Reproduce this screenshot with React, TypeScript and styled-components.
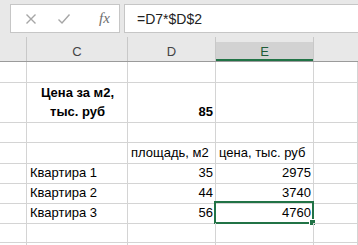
import React from "react";
import styled, { createGlobalStyle } from "styled-components";

const GlobalStyle = createGlobalStyle`
  html, body {
    margin: 0;
    padding: 0;
    background: #ffffff;
  }
  body {
    font-family: "Liberation Sans", Arial, sans-serif;
    overflow: hidden;
  }
`;

type Align = "left" | "right" | "center";

interface CellData {
  text?: string;
  align?: Align;
  bold?: boolean;
  selected?: boolean;
}

const columns = ["", "C", "D", "E", ""];
const selectedCol = 3;

const rows: { height: number; cells: CellData[] }[] = [
  { height: 21, cells: [{}, {}, {}, {}, {}] },
  {
    height: 40,
    cells: [
      {},
      { text: "Цена за м2,\nтыс. руб", align: "center", bold: true },
      { text: "85", align: "right", bold: true },
      {},
      {},
    ],
  },
  { height: 20, cells: [{}, {}, {}, {}, {}] },
  {
    height: 20,
    cells: [
      {},
      {},
      { text: "площадь, м2", align: "left" },
      { text: "цена, тыс. руб", align: "left" },
      {},
    ],
  },
  {
    height: 20,
    cells: [
      {},
      { text: "Квартира 1", align: "left" },
      { text: "35", align: "right" },
      { text: "2975", align: "right" },
      {},
    ],
  },
  {
    height: 20,
    cells: [
      {},
      { text: "Квартира 2", align: "left" },
      { text: "44", align: "right" },
      { text: "3740", align: "right" },
      {},
    ],
  },
  {
    height: 20,
    cells: [
      {},
      { text: "Квартира 3", align: "left" },
      { text: "56", align: "right" },
      { text: "4760", align: "right", selected: true },
      {},
    ],
  },
  { height: 20, cells: [{}, {}, {}, {}, {}] },
  { height: 20, cells: [{}, {}, {}, {}, {}] },
];

const COLS = "27px 101px 88px 98px 1fr";

const App = () => {
  return (
    <Page>
      <GlobalStyle />
      <FormulaBar>
        <ButtonBox>
          <BarIcon>
            <svg width="12" height="12" viewBox="0 0 12 12">
              <path d="M1.5 1.5 L10.5 10.5 M10.5 1.5 L1.5 10.5" stroke="#a6a6a6" strokeWidth="1.4" fill="none" />
            </svg>
          </BarIcon>
          <BarIcon>
            <svg width="14" height="12" viewBox="0 0 14 12">
              <path d="M1.5 6.5 L5 10 L12.5 1.5" stroke="#a6a6a6" strokeWidth="1.4" fill="none" />
            </svg>
          </BarIcon>
          <FxLabel>fx</FxLabel>
        </ButtonBox>
        <FormulaInput>=D7*$D$2</FormulaInput>
      </FormulaBar>
      <HeaderRow>
        {columns.map((c, i) => (
          <HeaderCell key={i} $selected={i === selectedCol}>
            {c}
          </HeaderCell>
        ))}
      </HeaderRow>
      {rows.map((row, r) => (
        <Row key={r} $height={row.height}>
          {row.cells.map((cell, c) => (
            <Cell key={c} $align={cell.align || "left"} $bold={!!cell.bold}>
              {cell.text}
              {cell.selected && (
                <Selection>
                  <FillHandle />
                </Selection>
              )}
            </Cell>
          ))}
        </Row>
      ))}
    </Page>
  );
};

export default App;

const Page = styled.div`
  width: 358px;
  height: 245px;
  overflow: hidden;
  background: #ffffff;
`;

const FormulaBar = styled.div`
  display: flex;
  align-items: stretch;
  gap: 4px;
  height: 37px;
  padding: 4px 0 0 10px;
  box-sizing: border-box;
  background: #e8e8e8;
`;

const ButtonBox = styled.div`
  display: flex;
  align-items: center;
  width: 110px;
  height: 29px;
  box-sizing: border-box;
  border: 1px solid #c6c6c6;
  background: #ffffff;
  padding-left: 14px;
`;

const BarIcon = styled.div`
  width: 32px;
  display: flex;
  align-items: center;
  justify-content: flex-start;
  margin-top: 1px;
`;

const FxLabel = styled.span`
  font-family: "Liberation Serif", "Times New Roman", serif;
  font-style: italic;
  font-size: 15px;
  color: #6e6e6e;
  margin-left: 10px;
`;

const FormulaInput = styled.div`
  flex: 1;
  height: 29px;
  box-sizing: border-box;
  border: 1px solid #c6c6c6;
  border-right: none;
  background: #ffffff;
  padding-left: 12px;
  display: flex;
  align-items: center;
  font-size: 14px;
  color: #222222;
`;

const HeaderRow = styled.div`
  display: grid;
  grid-template-columns: ${COLS};
  height: 25px;
  background: #e8e8e8;
  border-bottom: 1px solid #9b9b9b;
  box-sizing: border-box;
`;

const HeaderCell = styled.div<{ $selected: boolean }>`
  display: flex;
  align-items: flex-end;
  justify-content: center;
  padding-bottom: 2px;
  box-sizing: border-box;
  border-right: 1px solid #c8c8c8;
  font-size: 13px;
  color: ${(p) => (p.$selected ? "#1e5c38" : "#444444")};
  background: ${(p) =>
    p.$selected ? "linear-gradient(transparent 5px, #d2d2d2 5px)" : "transparent"};
  box-shadow: ${(p) => (p.$selected ? "inset 0 -2px 0 #217346" : "none")};
  &:last-child {
    border-right: none;
  }
`;

const Row = styled.div<{ $height: number }>`
  display: grid;
  grid-template-columns: ${COLS};
  height: ${(p) => p.$height}px;
`;

const Cell = styled.div<{ $align: Align; $bold: boolean }>`
  position: relative;
  min-width: 0;
  box-sizing: border-box;
  border-right: 1px solid #d4d4d4;
  border-bottom: 1px solid #d4d4d4;
  display: flex;
  flex-direction: column;
  justify-content: flex-end;
  align-items: ${(p) =>
    p.$align === "right" ? "flex-end" : p.$align === "center" ? "center" : "flex-start"};
  text-align: ${(p) => p.$align};
  white-space: pre;
  overflow: visible;
  padding: 0 2px 1px 3px;
  font-size: 13px;
  line-height: 19px;
  font-weight: ${(p) => (p.$bold ? 700 : 400)};
  color: #000000;
`;

const Selection = styled.div`
  position: absolute;
  left: -2px;
  top: -2px;
  right: -1px;
  bottom: -1px;
  border: 2px solid #217346;
  pointer-events: none;
`;

const FillHandle = styled.div`
  position: absolute;
  right: -4px;
  bottom: -4px;
  width: 5px;
  height: 5px;
  background: #217346;
  border: 1px solid #ffffff;
`;
